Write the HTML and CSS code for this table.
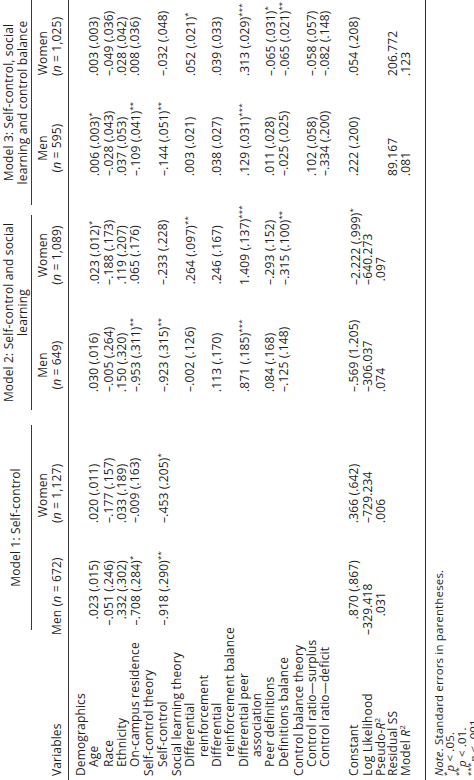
FILE: index.html
```html
<!DOCTYPE html>
<html lang="en">
<head>
<meta charset="utf-8">
<title>Table</title>
<link rel="stylesheet" href="styles.css">
</head>
<body>
<div class="page">
  <table class="tbl">
    <colgroup>
      <col class="cv"><col class="c1"><col class="c2"><col class="c3"><col class="c4"><col class="c5"><col class="c6">
    </colgroup>
    <thead>
      <tr class="h1">
        <th class="var" rowspan="2">Variables</th>
        <th class="model" colspan="2"><div class="spanner m1">Model 1: Self-control</div></th>
        <th class="model" colspan="2"><div class="spanner m2">Model 2: Self-control and social<br>learning</div></th>
        <th class="model" colspan="2"><div class="spanner m3">Model 3: Self-control, social<br>learning and control balance</div></th>
      </tr>
      <tr class="h2">
        <th class="k1">Men (<i>n</i> = 672)</th>
        <th class="k2">Women<br>(<i>n</i> = 1,127)</th>
        <th class="k3">Men<br>(<i>n</i> = 649)</th>
        <th class="k4">Women<br>(<i>n</i> = 1,089)</th>
        <th class="k5">Men<br>(<i>n</i> = 595)</th>
        <th class="k6">Women<br>(<i>n</i> = 1,025)</th>
      </tr>
    </thead>
    <tbody>
      <tr class="first"><td class="lab l0">Demographics</td><td class="k1"></td><td class="k2"></td><td class="k3"></td><td class="k4"></td><td class="k5"></td><td class="k6"></td></tr>
      <tr><td class="lab l1">Age</td><td class="k1">.023 (.015)</td><td class="k2">.020 (.011)</td><td class="k3">.030 (.016)</td><td class="k4">.023 (.012)<span class="sig">*</span></td><td class="k5">.006 (.003)<span class="sig">*</span></td><td class="k6">.003 (.003)</td></tr>
      <tr><td class="lab l1">Race</td><td class="k1">–.051 (.246)</td><td class="k2">–.177 (.157)</td><td class="k3">–.005 (.264)</td><td class="k4">–.188 (.173)</td><td class="k5">–.028 (.043)</td><td class="k6">–.049 (.036)</td></tr>
      <tr><td class="lab l1">Ethnicity</td><td class="k1">.332 (.302)</td><td class="k2">.033 (.189)</td><td class="k3">.150 (.320)</td><td class="k4">.119 (.207)</td><td class="k5">.037 (.053)</td><td class="k6">.028 (.042)</td></tr>
      <tr><td class="lab l1">On-campus residence</td><td class="k1">–.708 (.284)<span class="sig">*</span></td><td class="k2">–.009 (.163)</td><td class="k3">–.953 (.311)<span class="sig">**</span></td><td class="k4">.065 (.176)</td><td class="k5">–.109 (.041)<span class="sig">**</span></td><td class="k6">.008 (.036)</td></tr>
      <tr><td class="lab l0">Self-control theory</td><td class="k1"></td><td class="k2"></td><td class="k3"></td><td class="k4"></td><td class="k5"></td><td class="k6"></td></tr>
      <tr><td class="lab l1">Self-control</td><td class="k1">–.918 (.290)<span class="sig">**</span></td><td class="k2">–.453 (.205)<span class="sig">*</span></td><td class="k3">–.923 (.315)<span class="sig">**</span></td><td class="k4">–.233 (.228)</td><td class="k5">–.144 (.051)<span class="sig">**</span></td><td class="k6">–.032 (.048)</td></tr>
      <tr><td class="lab l0">Social learning theory</td><td class="k1"></td><td class="k2"></td><td class="k3"></td><td class="k4"></td><td class="k5"></td><td class="k6"></td></tr>
      <tr><td class="lab l1 hang">Differential<br>reinforcement</td><td class="k1"></td><td class="k2"></td><td class="k3">–.002 (.126)</td><td class="k4">.264 (.097)<span class="sig">**</span></td><td class="k5">.003 (.021)</td><td class="k6">.052 (.021)<span class="sig">*</span></td></tr>
      <tr><td class="lab l1 hang">Differential<br>reinforcement balance</td><td class="k1"></td><td class="k2"></td><td class="k3">.113 (.170)</td><td class="k4">.246 (.167)</td><td class="k5">.038 (.027)</td><td class="k6">.039 (.033)</td></tr>
      <tr><td class="lab l1 hang">Differential peer<br>association</td><td class="k1"></td><td class="k2"></td><td class="k3">.871 (.185)<span class="sig">***</span></td><td class="k4">1.409 (.137)<span class="sig">***</span></td><td class="k5">.129 (.031)<span class="sig">***</span></td><td class="k6">.313 (.029)<span class="sig">***</span></td></tr>
      <tr><td class="lab l1">Peer definitions</td><td class="k1"></td><td class="k2"></td><td class="k3">.084 (.168)</td><td class="k4">–.293 (.152)</td><td class="k5">.011 (.028)</td><td class="k6">–.065 (.031)<span class="sig">*</span></td></tr>
      <tr><td class="lab l1">Definitions balance</td><td class="k1"></td><td class="k2"></td><td class="k3">–.125 (.148)</td><td class="k4">–.315 (.100)<span class="sig">**</span></td><td class="k5">–.025 (.025)</td><td class="k6">–.065 (.021)<span class="sig">**</span></td></tr>
      <tr><td class="lab l0">Control balance theory</td><td class="k1"></td><td class="k2"></td><td class="k3"></td><td class="k4"></td><td class="k5"></td><td class="k6"></td></tr>
      <tr><td class="lab l1">Control ratio—surplus</td><td class="k1"></td><td class="k2"></td><td class="k3"></td><td class="k4"></td><td class="k5">.102 (.058)</td><td class="k6">–.058 (.057)</td></tr>
      <tr><td class="lab l1">Control ratio—deficit</td><td class="k1"></td><td class="k2"></td><td class="k3"></td><td class="k4"></td><td class="k5">–.334 (.200)</td><td class="k6">–.082 (.148)</td></tr>
      <tr class="gap"><td colspan="7"></td></tr>
      <tr class="fit"><td class="lab l0">Constant</td><td class="k1">.870 (.867)</td><td class="k2">.366 (.642)</td><td class="k3">–.569 (1.205)</td><td class="k4">–2.222 (.999)<span class="sig">*</span></td><td class="k5">.222 (.200)</td><td class="k6">.054 (.208)</td></tr>
      <tr class="fit"><td class="lab l0">Log Likelihood</td><td class="k1"><span class="solo">–329.418</span></td><td class="k2"><span class="solo">–729.234</span></td><td class="k3"><span class="solo">–306.037</span></td><td class="k4"><span class="solo">–640.273</span></td><td class="k5"></td><td class="k6"></td></tr>
      <tr class="fit"><td class="lab l0">Pseudo-<i>R</i><sup>2</sup></td><td class="k1"><span class="solo">.031</span></td><td class="k2"><span class="solo">.006</span></td><td class="k3"><span class="solo">.074</span></td><td class="k4"><span class="solo">.097</span></td><td class="k5"></td><td class="k6"></td></tr>
      <tr class="fit"><td class="lab l0">Residual SS</td><td class="k1"></td><td class="k2"></td><td class="k3"></td><td class="k4"></td><td class="k5"><span class="solo">89.167</span></td><td class="k6"><span class="solo">206.772</span></td></tr>
      <tr class="fit last"><td class="lab l0">Model <i>R</i><sup>2</sup></td><td class="k1"></td><td class="k2"></td><td class="k3"></td><td class="k4"></td><td class="k5"><span class="solo">.081</span></td><td class="k6"><span class="solo">.123</span></td></tr>
    </tbody>
  </table>
  <div class="notes">
    <p><i>Note</i>. Standard errors in parentheses.</p>
    <p><sup>*</sup><i>p</i> &lt; .05.</p>
    <p><sup>**</sup><i>p</i> &lt; .01.</p>
    <p><sup>***</sup><i>p</i> &lt; .001</p>
  </div>
</div>
</body>
</html>
```

FILE: styles.css
```css
html, body {
  margin: 0;
  padding: 0;
  background: #ffffff;
  overflow: hidden;
}
body {
  width: 474px;
  height: 780px;
}
.page {
  width: 780px;
  height: 474px;
  transform-origin: 0 0;
  transform: translateY(780px) rotate(-90deg);
  font-family: "Open Sans", "Liberation Sans", sans-serif;
  font-size: 12px;
  letter-spacing: 0.15px;
  color: #1e1e1e;
  background: #ffffff;
}
.tbl {
  width: 780px;
  table-layout: fixed;
  border-collapse: collapse;
  margin-top: 0;
}
.cv { width: 145px; }
.c1 { width: 90px; }
.c2 { width: 125px; }
.c3 { width: 100px; }
.c4 { width: 110px; }
.c5 { width: 105px; }
.c6 { width: 105px; }

th, td {
  padding: 0;
  font-weight: normal;
  line-height: 13.3px;
  vertical-align: top;
  white-space: nowrap;
}
thead th {
  line-height: 14px;
}
.h1 th.model {
  vertical-align: bottom;
  text-align: center;
}
.spanner {
  border-bottom: 1px solid #3a3a3a;
  padding-top: 1.5px;
  padding-bottom: 1px;
  min-height: 28px;
  display: flex;
  flex-direction: column;
  justify-content: center;
}
.m1 { margin: 0 5px 0 5px; }
.m2 { margin: 0 5px 0 10px; }
.m3 { margin: 0 0 0 5px; }
th.var {
  text-align: left;
  vertical-align: bottom;
  padding-left: 4px;
  padding-bottom: 4px;
}
.h2 th {
  text-align: center;
  vertical-align: bottom;
  padding-top: 4px;
  padding-bottom: 4px;
}
thead {
  border-bottom: 1px solid #3a3a3a;
}
tbody td {
  text-align: right;
}
.k1 { padding-left: 0; padding-right: 15px; }
.k2 { padding-left: 22px; padding-right: 47px; }
.k3 { padding-left: 28px; padding-right: 18px; }
.k4 { padding-left: 35px; padding-right: 15px; }
.k5 { padding-left: 34px; padding-right: 15px; }
.k6 { padding-left: 29px; padding-right: 30px; }

tbody td.lab {
  text-align: left;
}
.l0 { padding-left: 4px; }
.l1 { padding-left: 13px; }
.hang {
  padding-left: 23px;
  text-indent: -10px;
}
tr.first td { padding-top: 5.5px; }
tr.gap td { height: 16px; }
tr.fit td { line-height: 12.5px; }
tr.last td { padding-bottom: 12.5px; }
tbody { border-bottom: 1.5px solid #2e2e2e; }

.sig {
  display: inline-block;
  width: 0;
  text-align: left;
  font-size: 8px;
  line-height: 8px;
  vertical-align: 5px;
  white-space: nowrap;
  letter-spacing: 0;
}
.solo {
  display: inline-block;
  margin-right: 32px;
}
sup {
  font-size: 8px;
  line-height: 0;
}
.notes {
  padding: 7px 0 0 4px;
  font-size: 11.5px;
}
.notes p {
  margin: 0;
  line-height: 11.7px;
}
```
